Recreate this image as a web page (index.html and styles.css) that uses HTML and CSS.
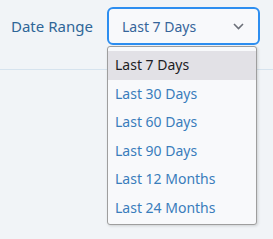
FILE: index.html
```html
<!DOCTYPE html>
<html>
<head>
<meta charset="utf-8">
<link rel="stylesheet" href="styles.css">
</head>
<body>
<div class="header">
  <span class="label">Date Range</span>
  <div class="select-wrap">
    <div class="select">
      <span class="value">Last 7 Days</span>
      <svg class="chevron" width="11" height="7" viewBox="0 0 11 7"><path d="M1 1 L5.5 5.5 L10 1" fill="none" stroke="#6b6f78" stroke-width="1.6"/></svg>
    </div>
    <ul class="menu">
      <li class="item active">Last 7 Days</li>
      <li class="item">Last 30 Days</li>
      <li class="item">Last 60 Days</li>
      <li class="item">Last 90 Days</li>
      <li class="item">Last 12 Months</li>
      <li class="item">Last 24 Months</li>
    </ul>
  </div>
</div>
</body>
</html>
```
FILE: styles.css
```css
html, body {
  margin: 0;
  padding: 0;
  background: #f1f4f7;
  font-family: "Noto Sans", "Open Sans", sans-serif;
}
body {
  min-height: 239px;
}
.header {
  box-sizing: border-box;
  height: 70px;
  display: flex;
  align-items: flex-start;
  padding: 7px 0 0 11px;
  border-bottom: 1px solid #d6e3ee;
}
.label {
  width: 96px;
  line-height: 38px;
  font-size: 15px;
  color: #2f6697;
}
.select-wrap {
  position: relative;
  z-index: 2;
}
.select {
  box-sizing: border-box;
  width: 153px;
  height: 38px;
  border: 2px solid #2d8ef0;
  border-radius: 6px;
  background: #f8f9fb;
  display: flex;
  align-items: center;
  justify-content: space-between;
  padding: 0 14px 0 13px;
  font-size: 14px;
  color: #36659a;
}
.chevron {
  display: block;
}
.menu {
  position: absolute;
  top: 39px;
  left: 0;
  box-sizing: border-box;
  width: 150px;
  margin: 0;
  padding: 4px 0 2px;
  list-style: none;
  background: #f8f9fb;
  border: 1px solid #9e9e9e;
  border-radius: 3px;
  box-shadow: 1px 1px 3px rgba(0, 0, 0, 0.15);
}
.item {
  height: 28.5px;
  line-height: 28.5px;
  padding-left: 7px;
  font-size: 14px;
  color: #3a7dbb;
}
.item.active {
  background: #e2e1e6;
  color: #1d1d24;
}
```
